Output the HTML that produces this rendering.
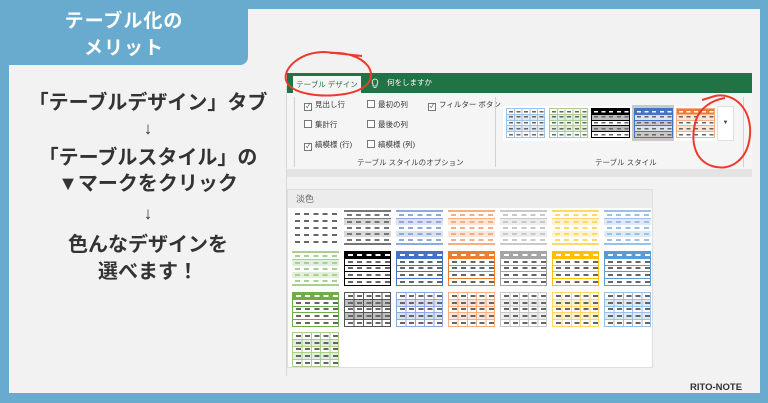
<!DOCTYPE html>
<html><head><meta charset="utf-8"><style>
*{margin:0;padding:0;box-sizing:border-box}
body{width:768px;height:403px;background:#69aacf;position:relative;overflow:hidden;font-family:"Liberation Sans","Noto Sans CJK JP",sans-serif}
.panel{position:absolute;left:9px;top:9px;width:751px;height:384px;background:#f2f2f2}
.bluetab{position:absolute;left:0;top:0;width:248px;height:65px;background:#69aacf;border-bottom-right-radius:8px}
.title{position:absolute;left:0;top:8px;width:248px;text-align:center;color:#fff;font-weight:bold;font-size:19px;line-height:27px;letter-spacing:1px}
.lt{position:absolute;left:9px;width:278px;text-align:center;color:#333;font-weight:bold;font-size:20px;line-height:26px}
.ar{font-size:17px}
.rib{position:absolute;left:287px;top:73px;width:465px;height:104px;background:#f5f5f5}
.green{position:absolute;left:0;top:0;width:465px;height:20px;background:#217346}
.tab{position:absolute;left:6px;top:3px;width:68px;height:17px;background:#f5f5f5;color:#217346;font-size:7.5px;line-height:17px;text-align:center}
.ask{position:absolute;left:100px;top:0;color:#fff;font-size:7.5px;line-height:20px}
.rl{position:absolute;font-size:7.5px;color:#333;line-height:10px;white-space:nowrap}
.cb{display:inline-block;width:8px;height:8px;border:1px solid #777;background:#fff;vertical-align:-1px;margin-right:3px;font-size:6px;line-height:6px;text-align:center}
.sep{position:absolute;width:1px;background:#d0d0d0}
.strip{position:absolute;left:0;top:96px;width:465px;height:8px;background:#e4e4e4}
.gal{position:absolute;left:287px;top:189px;width:366px;height:179px;background:#fff;border:1px solid #ddd}
.gh{height:18px;background:#ececec;color:#666;font-size:9px;line-height:18px;padding-left:8px}
.t{position:absolute;width:47px;height:35px;display:flex;flex-direction:column;overflow:hidden}
.t.sm{width:39px;height:30px}
.t i{flex:1;display:block;background:repeating-linear-gradient(90deg,var(--d,#666) 0 5px,transparent 5px 9.2px) 3px 50%/46px 2px no-repeat,var(--r,transparent)}
.t.sm i{background:repeating-linear-gradient(90deg,var(--d,#666) 0 4px,transparent 4px 7.6px) 2px 50%/38px 1.5px no-repeat,var(--r,transparent)}
.L{border-top:2px solid var(--c);border-bottom:2px solid var(--c)}
.L i{--d:var(--c)}
.L i:nth-child(2),.L i:nth-child(4){--r:var(--t)}
.L i:first-child{border-bottom:1px solid var(--c)}
.M{border:1px solid var(--c)}
.M i+i{border-top:1px solid var(--c)}
.M i:first-child{--r:var(--c);--d:#fff}
.G{border:1px solid var(--c)}
.G i+i{border-top:1px solid var(--c)}
.G i:nth-child(2),.G i:nth-child(4){--r:var(--t)}
.G::after{content:"";position:absolute;inset:0;background:repeating-linear-gradient(90deg,transparent 0 8.4px,var(--c) 8.4px 9.4px)}
.G.sm::after{background:repeating-linear-gradient(90deg,transparent 0 6.8px,var(--c) 6.8px 7.8px)}
</style></head><body>
<div class="panel"></div><div class="bluetab"></div>
<div class="title">テーブル化の<br>メリット</div>
<div class="lt" style="top:90px">「テーブルデザイン」タブ</div>
<div class="lt ar" style="top:116px">↓</div>
<div class="lt" style="top:145px">「テーブルスタイル」の</div>
<div class="lt" style="top:171px">▼マークをクリック</div>
<div class="lt ar" style="top:201px">↓</div>
<div class="lt" style="top:232px">色んなデザインを</div>
<div class="lt" style="top:259px">選べます！</div>
<div style="position:absolute;left:286px;top:86px;width:1px;height:290px;background:#d8d8d8"></div>

<div class="rib">
<div class="green"><div class="tab">テーブル デザイン</div>
<svg style="position:absolute;left:84px;top:5px" width="8" height="11" viewBox="0 0 8 11"><path d="M4 1a3 3 0 0 0-2 5v2h4V6a3 3 0 0 0-2-5zM2.5 9.5h3" fill="none" stroke="#fff" stroke-width="0.8"/></svg>
<div class="ask">何をしますか</div></div>
<div class="rl" style="left:17px;top:27px"><span class="cb">✓</span>見出し行</div>
<div class="rl" style="left:17px;top:47px"><span class="cb"></span>集計行</div>
<div class="rl" style="left:17px;top:67px"><span class="cb">✓</span>縞模様 (行)</div>
<div class="rl" style="left:80px;top:27px"><span class="cb"></span>最初の列</div>
<div class="rl" style="left:80px;top:47px"><span class="cb"></span>最後の列</div>
<div class="rl" style="left:80px;top:67px"><span class="cb"></span>縞模様 (列)</div>
<div class="rl" style="left:141px;top:27px"><span class="cb">✓</span>フィルター ボタン</div>
<div class="rl" style="left:70px;top:85px;color:#444">テーブル スタイルのオプション</div>
<div class="rl" style="left:308px;top:85px;color:#444">テーブル スタイル</div>
<div class="sep" style="left:7px;top:24px;height:70px"></div>
<div class="sep" style="left:208px;top:24px;height:70px"></div>
<div class="sep" style="left:456px;top:24px;height:70px"></div>
<div style="position:absolute;left:216px;top:33px;width:230px;height:35px;background:#fff"></div>
<div style="position:absolute;left:345px;top:32px;width:42px;height:36px;background:#c8c8c8"></div>
<div style="position:absolute;left:430px;top:33px;width:17px;height:35px;background:#fff;border:1px solid #e0e0e0;font-size:6px;color:#444;text-align:center;line-height:33px">▼</div>
<div class="t sm G" style="left:219px;top:35px;--c:#9dc3e6;--t:#ddebf7"><i></i><i></i><i></i><i></i><i></i></div>
<div class="t sm G" style="left:262px;top:35px;--c:#a9d08e;--t:#e2efda"><i></i><i></i><i></i><i></i><i></i></div>
<div class="t sm M" style="left:304px;top:35px;--c:#000"><i></i><i style="--r:#bbb"></i><i></i><i style="--r:#bbb"></i><i></i></div>
<div class="t sm M" style="left:347px;top:35px;--c:#4472c4"><i></i><i style="--r:#d9e1f2"></i><i></i><i style="--r:#d9e1f2"></i><i></i></div>
<div class="t sm M" style="left:389px;top:35px;--c:#f4b084"><i style="--r:#ed7d31"></i><i style="--r:#fce4d6"></i><i></i><i style="--r:#fce4d6"></i><i></i></div>
<div class="strip"></div>
</div>

<div class="gal"><div class="gh">淡色</div></div>
<div class="t" style="left:292px;top:210px"><i></i><i></i><i></i><i></i><i></i></div>
<div class="t L" style="left:344px;top:210px;--c:#777;--t:#d9d9d9"><i></i><i></i><i></i><i></i><i></i></div>
<div class="t L" style="left:396px;top:210px;--c:#8ea9db;--t:#d9e1f2"><i></i><i></i><i></i><i></i><i></i></div>
<div class="t L" style="left:448px;top:210px;--c:#f4b084;--t:#fce4d6"><i></i><i></i><i></i><i></i><i></i></div>
<div class="t L" style="left:500px;top:210px;--c:#c9c9c9;--t:#ededed"><i></i><i></i><i></i><i></i><i></i></div>
<div class="t L" style="left:552px;top:210px;--c:#ffd966;--t:#fff2cc"><i></i><i></i><i></i><i></i><i></i></div>
<div class="t L" style="left:604px;top:210px;--c:#9bc2e6;--t:#ddebf7"><i></i><i></i><i></i><i></i><i></i></div>

<div class="t L" style="left:292px;top:251px;--c:#a9d08e;--t:#e2efda"><i></i><i></i><i></i><i></i><i></i></div>
<div class="t M" style="left:344px;top:251px;--c:#000"><i></i><i></i><i></i><i></i><i></i></div>
<div class="t M" style="left:396px;top:251px;--c:#4472c4"><i></i><i></i><i></i><i></i><i></i></div>
<div class="t M" style="left:448px;top:251px;--c:#ed7d31"><i></i><i></i><i></i><i></i><i></i></div>
<div class="t M" style="left:500px;top:251px;--c:#a5a5a5"><i></i><i></i><i></i><i></i><i></i></div>
<div class="t M" style="left:552px;top:251px;--c:#ffc000"><i></i><i></i><i></i><i></i><i></i></div>
<div class="t M" style="left:604px;top:251px;--c:#5b9bd5"><i></i><i></i><i></i><i></i><i></i></div>

<div class="t M" style="left:292px;top:292px;--c:#70ad47"><i></i><i></i><i></i><i></i><i></i></div>
<div class="t G" style="left:344px;top:292px;--c:#555;--t:#bfbfbf"><i></i><i></i><i></i><i></i><i></i></div>
<div class="t G" style="left:396px;top:292px;--c:#8ea9db;--t:#d9e1f2"><i></i><i></i><i></i><i></i><i></i></div>
<div class="t G" style="left:448px;top:292px;--c:#f4b084;--t:#fce4d6"><i></i><i></i><i></i><i></i><i></i></div>
<div class="t G" style="left:500px;top:292px;--c:#c9c9c9;--t:#ededed"><i></i><i></i><i></i><i></i><i></i></div>
<div class="t G" style="left:552px;top:292px;--c:#ffd966;--t:#fff2cc"><i></i><i></i><i></i><i></i><i></i></div>
<div class="t G" style="left:604px;top:292px;--c:#9bc2e6;--t:#ddebf7"><i></i><i></i><i></i><i></i><i></i></div>

<div class="t G" style="left:292px;top:332px;--c:#a9d08e;--t:#e2efda"><i></i><i></i><i></i><i></i><i></i></div>

<svg style="position:absolute;left:0;top:0" width="768" height="403">
<path d="M325 52 C300 52 283 68 286 80 C290 94 320 98 345 94 C368 90 376 78 368 66 C360 56 345 52 330 53 M325 52 L362 56" fill="none" stroke="#ee3a2c" stroke-width="2"/>
<path d="M715 96 C735 92 752 110 750 135 C748 160 730 172 712 166 C694 160 690 140 696 120 C700 108 712 100 725 98 M715 96 L702 100" fill="none" stroke="#ee3a2c" stroke-width="2"/>
</svg>
<div style="position:absolute;left:690px;top:382px;font-size:9.5px;font-weight:bold;color:#333">RITO-NOTE</div>
</body></html>
